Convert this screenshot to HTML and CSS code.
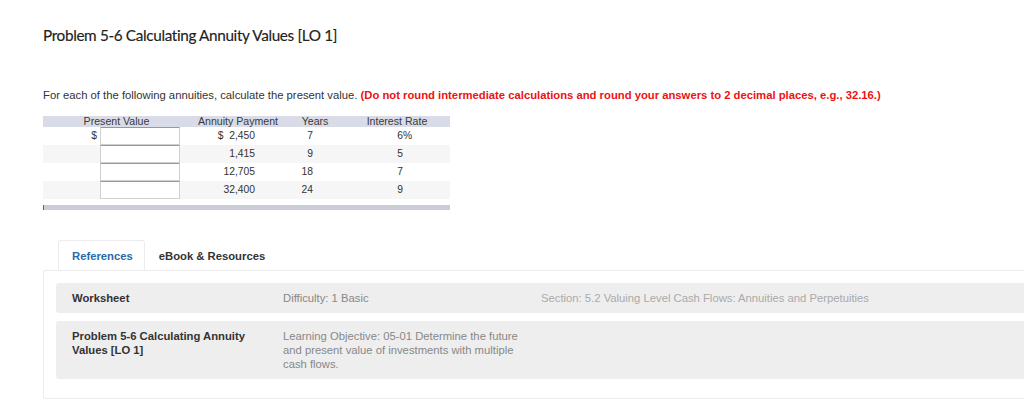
FILE: index.html
```html
<!DOCTYPE html>
<html>
<head>
<meta charset="utf-8">
<link rel="stylesheet" href="styles.css">
</head>
<body>
<div class="page">
  <h1 class="title">Problem 5-6 Calculating Annuity Values [LO 1]</h1>
  <p class="prompt">For each of the following annuities, calculate the present value. <strong class="warn">(Do not round intermediate calculations and round your answers to 2 decimal places, e.g., 32.16.)</strong></p>

  <div class="grid">
    <div class="hdr">Present Value</div>
    <div class="hdr">Annuity Payment</div>
    <div class="hdr">Years</div>
    <div class="hdr">Interest Rate</div>

    <div class="c pv"><span class="cur">$</span><input class="box" type="text"></div>
    <div class="c pay">$&nbsp;&nbsp;2,450</div>
    <div class="c yrs">7</div>
    <div class="c rate"><span class="num">6</span>%</div>

    <div class="c pv alt"><input class="box" type="text"></div>
    <div class="c pay alt">1,415</div>
    <div class="c yrs alt">9</div>
    <div class="c rate alt"><span class="num">5</span></div>

    <div class="c pv"><input class="box" type="text"></div>
    <div class="c pay">12,705</div>
    <div class="c yrs">18</div>
    <div class="c rate"><span class="num">7</span></div>

    <div class="c pv alt"><input class="box" type="text"></div>
    <div class="c pay alt">32,400</div>
    <div class="c yrs alt">24</div>
    <div class="c rate alt"><span class="num">9</span></div>
  </div>
  <div class="scrollbar"></div>

  <div class="tabs">
    <div class="tab active">References</div>
    <div class="tab">eBook &amp; Resources</div>
  </div>
  <div class="panel">
    <div class="ref-row">
      <div class="col1">Worksheet</div>
      <div class="col2">Difficulty: 1 Basic</div>
      <div class="col3">Section: 5.2 Valuing Level Cash Flows: Annuities and Perpetuities</div>
    </div>
    <div class="ref-row">
      <div class="col1">Problem 5-6 Calculating Annuity Values [LO 1]</div>
      <div class="col2">Learning Objective: 05-01 Determine the future and present value of investments with multiple cash flows.</div>
      <div class="col3"></div>
    </div>
  </div>
</div>
</body>
</html>
```

FILE: styles.css
```css
html, body {
  margin: 0;
  padding: 0;
  background: #fff;
}
body {
  font-family: "Liberation Sans", Arial, sans-serif;
  color: #333;
}
.page {
  padding: 0 0 0 43px;
}
.title {
  font-family: "Lato", "Liberation Sans", sans-serif;
  font-weight: 400;
  font-size: 15.3px;
  letter-spacing: -0.35px;
  color: #222;
  -webkit-text-stroke: 0.15px #222;
  margin: 0;
  padding-top: 25px;
  line-height: 20px;
}
.prompt {
  margin: 43px 0 0 0;
  font-size: 11.27px;
  line-height: 14px;
  color: #333;
}
.warn {
  color: #ee1111;
  font-weight: bold;
}
.grid {
  margin-top: 14px;
  display: grid;
  grid-template-columns: 147px 96px 58px 106px;
  width: 407px;
  font-size: 10.3px;
  color: #333;
}
.hdr {
  background: #d9dce6;
  text-align: center;
  height: 11px;
  line-height: 11px;
  font-size: 10.6px;
  color: #3a3a3a;
}
.c {
  height: 18px;
  line-height: 18px;
  background: #fff;
}
.c.alt {
  background: #f6f6f6;
}
.pv {
  display: flex;
  justify-content: flex-end;
  align-items: center;
  padding-right: 10px;
}
.cur {
  margin-right: 3px;
}
.box {
  box-sizing: border-box;
  width: 80px;
  height: 18px;
  margin: 0;
  padding: 0 3px;
  border: 1px solid #d0d0d0;
  border-top-color: #999;
  background: #fff;
  font: inherit;
}
.pay, .yrs {
  text-align: right;
}
.pay {
  padding-right: 31px;
}
.yrs {
  padding-right: 31px;
}
.rate {
  padding-left: 53px;
}
.num {
  display: inline-block;
  min-width: 6px;
  text-align: right;
}
.scrollbar {
  margin-top: 6px;
  width: 406px;
  height: 5px;
  background: #c9cdd8;
  border-left: 1px solid #666;
}
.tabs {
  margin-top: 30px;
  margin-left: 15px;
  display: flex;
  font-size: 11.27px;
  font-weight: bold;
}
.tab {
  height: 29px;
  line-height: 31px;
  padding: 0 11px 0 13px;
  color: #333;
  border: 1px solid transparent;
  border-bottom: none;
  border-radius: 3px 3px 0 0;
}
.tab.active {
  color: #2a6aa8;
  border-color: #ececec;
  background: #fff;
  position: relative;
  top: 1px;
  margin-top: -1px;
}
.panel {
  border: 1px solid #ececec;
  border-right: none;
  border-radius: 3px 0 0 3px;
  padding: 12px 0 19px 12px;
}
.ref-row {
  display: flex;
  background: #eeeeee;
  border-radius: 3px 0 0 3px;
  padding: 8px 0 8px 16px;
  font-size: 11.27px;
  line-height: 14px;
}
.ref-row + .ref-row {
  margin-top: 8px;
}
.col1 {
  width: 180px;
  margin-right: 31px;
  font-weight: bold;
  color: #333;
}
.col2 {
  width: 240px;
  margin-right: 18px;
  color: #888;
}
.col3 {
  color: #aaa;
}
```
